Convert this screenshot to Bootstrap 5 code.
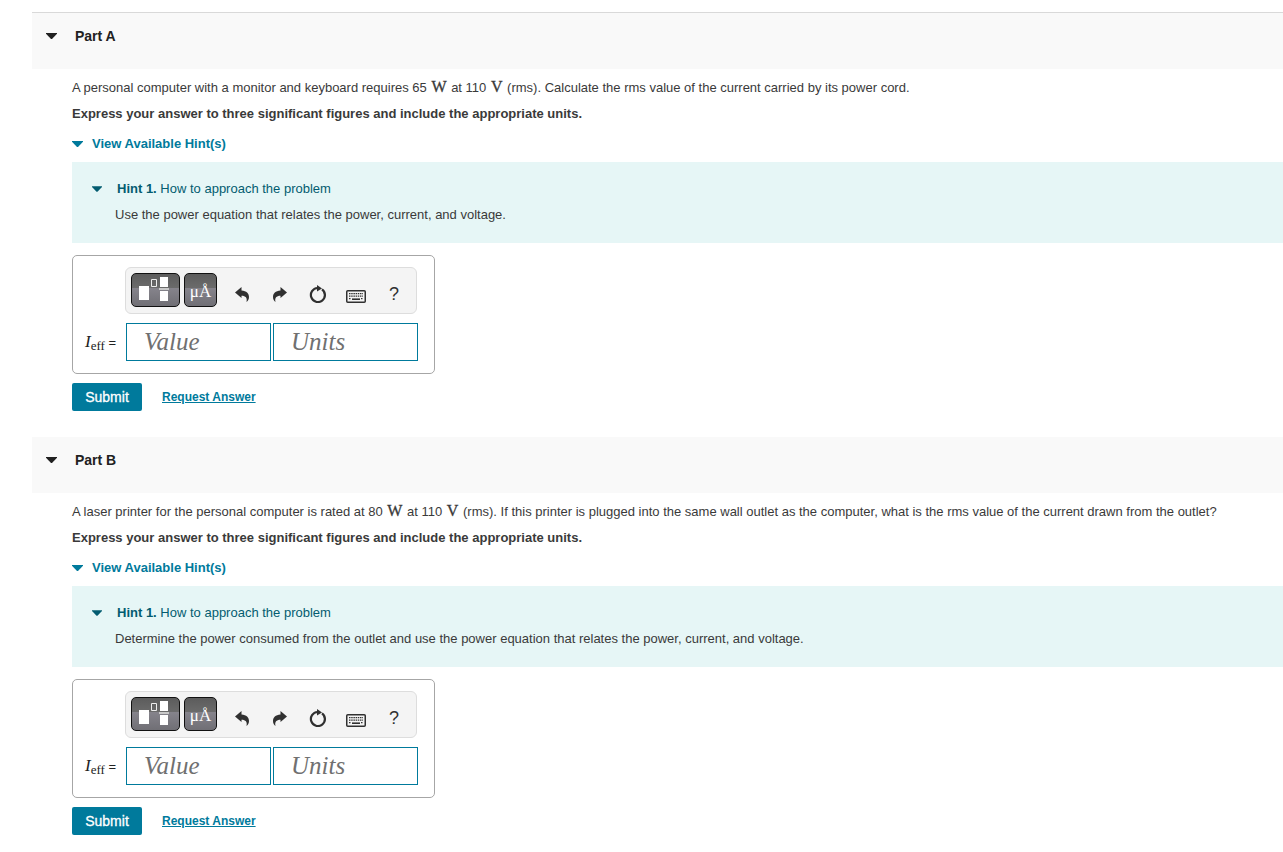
<!DOCTYPE html>
<html lang="en">
<head>
<meta charset="utf-8">
<meta name="viewport" content="width=device-width, initial-scale=1">
<title>Power and rms current</title>
<link href="https://cdn.jsdelivr.net/npm/bootstrap@5.3.0/dist/css/bootstrap.min.css" rel="stylesheet">
<style>
  body { font-family: "Liberation Sans", Arial, sans-serif; font-size: 13px; line-height: 26px; color: #3a3a3a; background: #fff; }
  main { padding: 12px 0 16px 32px; }
  .part-head { background: #f9f9f9; height: 56px; padding: 11px 0 0 14px; margin: 0; line-height: 24px; }
  .part-first { border-top: 1px solid #d9d9d9; height: 57px; }
  .part-toggle { font-size: 14px; font-weight: 700; line-height: 24px; color: #212121; gap: 18px; }
  .part-body { padding: 6px 0 26px 40px; }
  .unit { font-family: "Liberation Serif", "Times New Roman", serif; font-size: 16px; line-height: 16px; margin: 0 1px; -webkit-text-stroke: 0.3px; }
  .hints-link { color: #007a9c; gap: 9px; margin: 4px 0 5px; }
  .hint-box { background: #e6f6f6; padding: 14px 20px 15px; }
  .hint-link { color: #035c70; gap: 15px; }
  .hint-text { padding-left: 23px; }
  .answer-box { border: 1px solid #a6a6a6; border-radius: 5px; padding: 11px 16px 12px 12px; width: 363px; max-width: 100%; margin: 12px 0 9px; }
  .tools { background: #f4f4f4; border: 1px solid #ddd; border-radius: 6px; height: 47px; margin: 0 1px 9px 40px; padding: 5px 0 5px 5px; }
  .dark-tool { flex: none; height: 34px; border: 1px solid #111; border-radius: 5px; background: linear-gradient(#5c5c5c 0, #6b6b6b 44%, #85838b 45%, #706f75 100%); color: #fff; }
  .tool-wide { width: 49px; }
  .tool-unit { width: 33px; margin: 0 6px 0 4px; padding: 4px 0 0; font-family: "Liberation Serif", "Times New Roman", serif; font-size: 17px; line-height: 28px; }
  .plain-tool { flex: none; width: 38px; height: 34px; padding: 8px 0 0; color: #303030; font-size: 18px; line-height: 26px; }
  .keyboard-tool { padding-top: 12px; }
  .var-label { flex: none; width: 41px; line-height: 24px; color: #222; white-space: nowrap; }
  .math { font-family: "Liberation Serif", "Times New Roman", serif; font-size: 17px; }
  .math-sub { font-family: "Liberation Serif", "Times New Roman", serif; font-size: 13px; line-height: 13px; vertical-align: -3px; }
  .field-pair { gap: 2px; }
  .field { min-width: 0; height: 38px; border: 1px solid #007a9c; border-radius: 0; padding: 0 17px; font: italic 25px/36px "Liberation Serif", "Times New Roman", serif; color: #333; }
  .field::placeholder { color: #707070; opacity: 1; }
  .submit-btn { background: #007a9c; color: #fff; border-radius: 2px; width: 70px; height: 28px; font-size: 14px; line-height: 28px; -webkit-text-stroke: 0.3px; }
  .request-link { color: #007a9c; font-size: 12px; }
  svg { display: block; flex: none; }
</style>
</head>
<body>
<svg width="0" height="0" class="position-absolute" aria-hidden="true">
  <symbol id="caret" viewBox="0 0 11 6"><path d="M0 0h11v.8L6 6H5L0 .8z" fill="currentColor"/></symbol>
  <symbol id="template" viewBox="0 0 47 32">
    <path d="M7 12h10v14H7zM28 3h8v10h-8zM28 17h8v10h-8z" fill="#fff"/>
    <path d="M27 15h10" stroke="#c9c9c9" stroke-width="2"/>
    <path d="M19.500 5.500h5v7h-5z" fill="none" stroke="#eee"/>
  </symbol>
  <symbol id="undo" viewBox="0 0 16 16"><path d="M1 6.500 7.500 1v3.500c5 .3 7.500 3 7.500 6.500 0 2-.8 3.700-2.500 5 1-4-.8-6.200-5-6.200V12z" fill="currentColor"/></symbol>
  <symbol id="reset" viewBox="0 0 18 18"><path d="M13 4.300a7 7 0 1 1-4.500-1.300" fill="none" stroke="currentColor" stroke-width="2.200"/><path d="M8 0l5 3.500L8 6.500z" fill="currentColor"/></symbol>
  <symbol id="keyboard" viewBox="0 0 20 13"><rect x=".75" y=".75" width="18.500" height="11.500" rx="1" fill="none" stroke="currentColor" stroke-width="1.500"/><path d="M3 3.700h14M3 6.200h14M3 8.700h2M15 8.700h2" stroke="currentColor" stroke-width="1.300" stroke-dasharray="1.500 .7"/><path d="M6 9.200h8" stroke="currentColor" stroke-width="1.600"/></symbol>
</svg>
<main>
  <section>
    <h2 class="part-head part-first"><button type="button" class="part-toggle btn border-0 p-0 d-flex align-items-center"><svg width="11" height="6"><use href="#caret"/></svg>Part A</button></h2>
    <div class="part-body">
      <p class="m-0">A personal computer with a monitor and keyboard requires 65 <span class="unit">W</span> at 110 <span class="unit">V</span> (rms). Calculate the rms value of the current carried by its power cord.</p>
      <p class="m-0 fw-bold">Express your answer to three significant figures and include the appropriate units.</p>
      <a href="#hints-a" class="hints-link d-flex align-items-center fw-bold text-decoration-none"><svg width="11" height="6"><use href="#caret"/></svg>View Available Hint(s)</a>
      <div class="hint-box" id="hints-a">
        <a href="#hint-a1" class="hint-link d-flex align-items-center text-decoration-none"><svg width="10" height="6"><use href="#caret"/></svg><span><b>Hint 1.</b> How to approach the problem</span></a>
        <p class="hint-text m-0" id="hint-a1">Use the power equation that relates the power, current, and voltage.</p>
      </div>
      <form>
        <div class="answer-box">
          <div class="tools d-flex align-items-start" role="toolbar" aria-label="Math tools">
            <button type="button" class="dark-tool tool-wide btn p-0" aria-label="Templates"><svg width="47" height="32"><use href="#template"/></svg></button>
            <button type="button" class="dark-tool tool-unit btn">μÅ</button>
            <button type="button" class="plain-tool btn border-0 d-flex justify-content-center align-items-center" aria-label="Undo"><svg width="16" height="16"><use href="#undo"/></svg></button>
            <button type="button" class="plain-tool btn border-0 d-flex justify-content-center align-items-center" aria-label="Redo"><svg width="16" height="16" viewBox="0 0 16 16"><use href="#undo" transform="translate(16 0) scale(-1 1)"/></svg></button>
            <button type="button" class="plain-tool btn border-0 d-flex justify-content-center align-items-center" aria-label="Reset"><svg width="18" height="18"><use href="#reset"/></svg></button>
            <button type="button" class="plain-tool keyboard-tool btn border-0 d-flex justify-content-center align-items-center" aria-label="Keyboard"><svg width="20" height="13"><use href="#keyboard"/></svg></button>
            <button type="button" class="plain-tool btn border-0 d-flex justify-content-center align-items-center">?</button>
          </div>
          <div class="d-flex align-items-center">
            <label for="value-a" class="var-label"><i class="math">I</i><span class="math-sub">eff</span> =</label>
            <div class="field-pair d-flex flex-fill">
              <input id="value-a" type="text" class="field form-control" placeholder="Value">
              <input type="text" class="field form-control" placeholder="Units" aria-label="Units">
            </div>
          </div>
        </div>
        <div class="d-flex align-items-center">
          <button type="button" class="submit-btn btn border-0 p-0">Submit</button>
          <a href="#answer-a" class="request-link fw-bold ms-3 ps-1">Request Answer</a>
        </div>
      </form>
    </div>
  </section>
  <section>
    <h2 class="part-head"><button type="button" class="part-toggle btn border-0 p-0 d-flex align-items-center"><svg width="11" height="6"><use href="#caret"/></svg>Part B</button></h2>
    <div class="part-body">
      <p class="m-0">A laser printer for the personal computer is rated at 80 <span class="unit">W</span> at 110 <span class="unit">V</span> (rms). If this printer is plugged into the same wall outlet as the computer, what is the rms value of the current drawn from the outlet?</p>
      <p class="m-0 fw-bold">Express your answer to three significant figures and include the appropriate units.</p>
      <a href="#hints-b" class="hints-link d-flex align-items-center fw-bold text-decoration-none"><svg width="11" height="6"><use href="#caret"/></svg>View Available Hint(s)</a>
      <div class="hint-box" id="hints-b">
        <a href="#hint-b1" class="hint-link d-flex align-items-center text-decoration-none"><svg width="10" height="6"><use href="#caret"/></svg><span><b>Hint 1.</b> How to approach the problem</span></a>
        <p class="hint-text m-0" id="hint-b1">Determine the power consumed from the outlet and use the power equation that relates the power, current, and voltage.</p>
      </div>
      <form>
        <div class="answer-box">
          <div class="tools d-flex align-items-start" role="toolbar" aria-label="Math tools">
            <button type="button" class="dark-tool tool-wide btn p-0" aria-label="Templates"><svg width="47" height="32"><use href="#template"/></svg></button>
            <button type="button" class="dark-tool tool-unit btn">μÅ</button>
            <button type="button" class="plain-tool btn border-0 d-flex justify-content-center align-items-center" aria-label="Undo"><svg width="16" height="16"><use href="#undo"/></svg></button>
            <button type="button" class="plain-tool btn border-0 d-flex justify-content-center align-items-center" aria-label="Redo"><svg width="16" height="16" viewBox="0 0 16 16"><use href="#undo" transform="translate(16 0) scale(-1 1)"/></svg></button>
            <button type="button" class="plain-tool btn border-0 d-flex justify-content-center align-items-center" aria-label="Reset"><svg width="18" height="18"><use href="#reset"/></svg></button>
            <button type="button" class="plain-tool keyboard-tool btn border-0 d-flex justify-content-center align-items-center" aria-label="Keyboard"><svg width="20" height="13"><use href="#keyboard"/></svg></button>
            <button type="button" class="plain-tool btn border-0 d-flex justify-content-center align-items-center">?</button>
          </div>
          <div class="d-flex align-items-center">
            <label for="value-b" class="var-label"><i class="math">I</i><span class="math-sub">eff</span> =</label>
            <div class="field-pair d-flex flex-fill">
              <input id="value-b" type="text" class="field form-control" placeholder="Value">
              <input type="text" class="field form-control" placeholder="Units" aria-label="Units">
            </div>
          </div>
        </div>
        <div class="d-flex align-items-center">
          <button type="button" class="submit-btn btn border-0 p-0">Submit</button>
          <a href="#answer-b" class="request-link fw-bold ms-3 ps-1">Request Answer</a>
        </div>
      </form>
    </div>
  </section>
</main>
<script src="https://cdn.jsdelivr.net/npm/bootstrap@5.3.0/dist/js/bootstrap.bundle.min.js"></script>
</body>
</html>
